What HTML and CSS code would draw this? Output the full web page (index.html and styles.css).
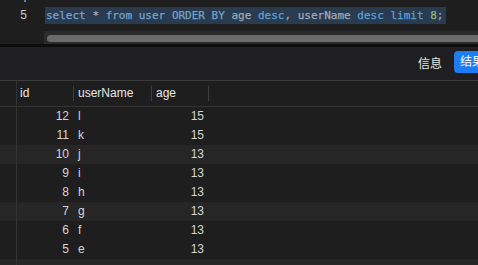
FILE: index.html
```html
<!DOCTYPE html>
<html lang="zh-CN">
<head>
    <meta charset="UTF-8">
    <title>Query</title>
    <link rel="stylesheet" href="styles.css">
</head>
<body>
    <div class="editor">
        <div class="lines">
            <div class="line"><span class="num">4</span><span class="code"></span></div>
            <div class="line"><span class="num">5</span><span class="code"><span class="sel"><span class="kw">select</span> <span class="op">*</span> <span class="kw">from</span> <span class="kw">user</span> <span class="kw">ORDER BY</span> <span class="id">age</span> <span class="kw2">desc</span><span class="op">,</span> <span class="id">userName</span> <span class="kw2">desc</span> <span class="kw2">limit</span> <span class="nm">8</span><span class="op">;</span></span></span></div>
        </div>
        <div class="hscroll">
            <div class="gutter-pad"></div>
            <div class="track"><div class="thumb"></div></div>
        </div>
    </div>

    <div class="toolbar">
        <span class="tab">信息</span>
        <span class="tab active">结果</span>
    </div>

    <div class="grid">
        <div class="row head">
            <span class="edge"></span>
            <span class="cell c-id">id</span>
            <span class="cell c-name">userName</span>
            <span class="cell c-age">age</span>
            <span class="cell c-rest"></span>
        </div>
        <div class="row"><span class="edge"></span><span class="cell c-id num-r">12</span><span class="cell c-name">l</span><span class="cell c-age num-r">15</span><span class="cell c-rest"></span></div>
        <div class="row"><span class="edge"></span><span class="cell c-id num-r">11</span><span class="cell c-name">k</span><span class="cell c-age num-r">15</span><span class="cell c-rest"></span></div>
        <div class="row stripe"><span class="edge"></span><span class="cell c-id num-r">10</span><span class="cell c-name">j</span><span class="cell c-age num-r">13</span><span class="cell c-rest"></span></div>
        <div class="row"><span class="edge"></span><span class="cell c-id num-r">9</span><span class="cell c-name">i</span><span class="cell c-age num-r">13</span><span class="cell c-rest"></span></div>
        <div class="row"><span class="edge"></span><span class="cell c-id num-r">8</span><span class="cell c-name">h</span><span class="cell c-age num-r">13</span><span class="cell c-rest"></span></div>
        <div class="row stripe"><span class="edge"></span><span class="cell c-id num-r">7</span><span class="cell c-name">g</span><span class="cell c-age num-r">13</span><span class="cell c-rest"></span></div>
        <div class="row"><span class="edge"></span><span class="cell c-id num-r">6</span><span class="cell c-name">f</span><span class="cell c-age num-r">13</span><span class="cell c-rest"></span></div>
        <div class="row"><span class="edge"></span><span class="cell c-id num-r">5</span><span class="cell c-name">e</span><span class="cell c-age num-r">13</span><span class="cell c-rest"></span></div>
        <div class="row stripe"><span class="edge"></span><span class="cell c-id num-r"></span><span class="cell c-name"></span><span class="cell c-age num-r"></span><span class="cell c-rest"></span></div>
    </div>
</body>
</html>
```

FILE: styles.css
```css
body {
    margin: 0;
    width: 478px;
    height: 265px;
    overflow: hidden;
    background: #1e1e1e;
    font-family: "Liberation Sans", Arial, "Noto Sans CJK SC", sans-serif;
    font-size: 12px;
}

/* editor */
.editor {
    height: 44px;
    background: #1e1e1e;
    overflow: hidden;
}

.lines {
    margin-top: -10px;
}

.line {
    display: flex;
    height: 17px;
    line-height: 17px;
    font-family: "DejaVu Sans Mono", monospace;
    font-size: 11px;
}

.num {
    width: 27px;
    padding-right: 4px;
    text-align: right;
    color: #c8c8c8;
    font-family: "Liberation Sans", Arial, sans-serif;
    font-size: 12px;
    flex-shrink: 0;
}

.code {
    margin-left: 14px;
    white-space: pre;
}

.sel {
    display: inline-block;
    background: #283b4f;
    padding: 0 3px 0 1px;
    -webkit-text-stroke: 0.25px;
}

.kw { color: #74a3cc; }
.kw2 { color: #5ca0d8; }
.op { color: #a0a8b2; }
.id { color: #9ea9b4; }
.nm { color: #8fba7c; }

.hscroll {
    display: flex;
    height: 13px;
    margin-top: 7px;
}

.gutter-pad {
    width: 44px;
}

.track {
    flex: 1;
    background: #2a2a2a;
    padding: 4px 0 2px 3px;
}

.thumb {
    height: 7px;
    background: #6b6b6b;
    border-radius: 4px 0 0 4px;
}

/* toolbar */
.toolbar {
    display: flex;
    justify-content: flex-end;
    align-items: center;
    gap: 12px;
    height: 33px;
    border-top: 3px solid #0d0d0d;
    border-bottom: 1px solid #3c3c3c;
    background: #1f1f21;
}

.tab {
    color: #e6e6e6;
    font-size: 12px;
    line-height: 22px;
}

.tab.active {
    background: #1b7cf3;
    color: #fff;
    padding: 0 12px 0 6px;
    border-radius: 4px;
    margin-right: -18px;
    margin-top: -4px;
}

/* results grid */
.grid {
    background: #1e1e1e;
}

.row {
    display: flex;
    height: 19px;
    line-height: 19px;
    color: #d4d4d4;
}

.row.stripe {
    background: #262626;
}

.row.head {
    height: 25px;
    line-height: 25px;
    border-bottom: 1px solid #343434;
    color: #e6e6e6;
}

.edge {
    width: 16px;
    border-right: 1px solid #333;
    flex-shrink: 0;
}

.cell {
    box-sizing: border-box;
    flex-shrink: 0;
    padding: 0 5px 0 4px;
    white-space: nowrap;
}

.head .cell {
    position: relative;
}

/* short column dividers in the header */
.head .cell::after {
    content: "";
    position: absolute;
    right: 0;
    top: 5px;
    height: 15px;
    border-right: 1px solid #3d3d3d;
}

.head .c-rest::after {
    display: none;
}

.head .cell.c-id { padding-left: 3px; }

.c-id { width: 57px; }
.c-name { width: 78px; }
.c-age { width: 57px; }
.c-rest { flex: 1; }

.num-r { text-align: right; }
```
